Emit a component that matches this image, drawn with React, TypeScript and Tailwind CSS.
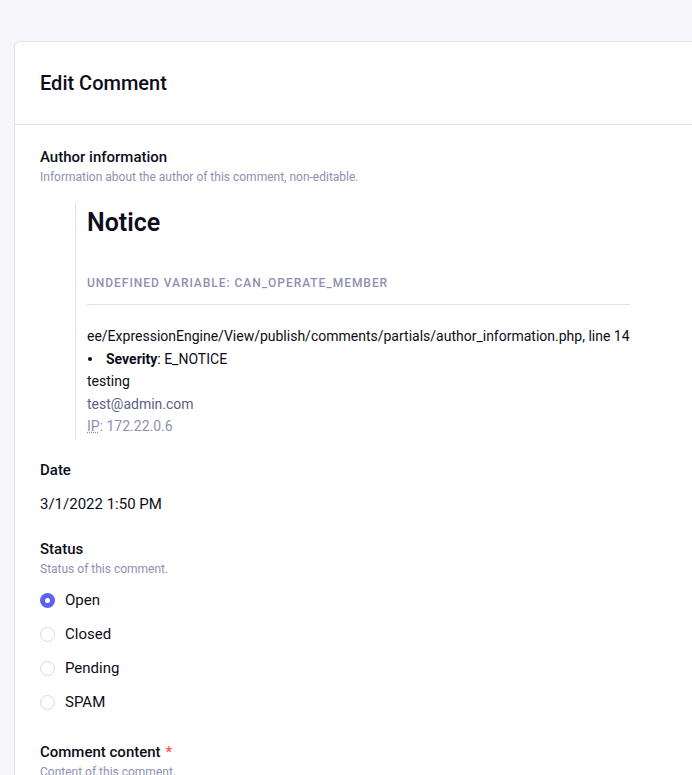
const statuses = [
  { label: "Open", checked: true },
  { label: "Closed", checked: false },
  { label: "Pending", checked: false },
  { label: "SPAM", checked: false },
];

const FieldLabel = ({ title, desc, required }: { title: string; desc?: string; required?: boolean }) => (
  <div>
    <div className="text-[15px] font-medium leading-[20px] text-[#0d0d19]">
      {title}
      {required && <span className="ml-[5px] text-[#fa5252]">*</span>}
    </div>
    {desc && <div className="mt-[1px] text-[12px] leading-[18px] text-[#8f90b0]">{desc}</div>}
  </div>
);

const Radio = ({ label, checked }: { label: string; checked: boolean }) => (
  <label className="flex h-[34px] items-center gap-[10px]">
    {checked ? (
      <span className="flex h-[15px] w-[15px] items-center justify-center rounded-full bg-[#5d63f1]">
        <span className="h-[5px] w-[5px] rounded-full bg-white" />
      </span>
    ) : (
      <span className="h-[15px] w-[15px] rounded-full border border-[#d8d8e6] bg-white" />
    )}
    <span className="text-[15px] text-[#0d0d19]">{label}</span>
  </label>
);

const App = () => {
  return (
    <div
      className="min-h-[775px] overflow-hidden bg-[#f5f5fa] pl-[14px] pt-[41px]"
      style={{ fontFamily: "Roboto, 'Liberation Sans', sans-serif" }}
    >
      <div className="-mr-4 rounded-tl-[6px] border border-[#e0e0ef] bg-white">
        <div className="flex h-[83px] items-center border-b border-[#e0e0ef] px-[25px]">
          <h1 className="text-[20px] font-medium text-[#0d0d19]">Edit Comment</h1>
        </div>

        <div className="px-[25px] pt-[22px]">
          <FieldLabel title="Author information" desc="Information about the author of this comment, non-editable." />

          <div className="ml-[35px] mt-[17px] w-fit border-l border-[#e0e0ef] pl-[11px] pb-[2px]">
            <h2 className="pt-[3px] text-[25px] font-semibold leading-[34px] text-[#0d0d19]">Notice</h2>
            <div className="mt-[34px] text-[12px] font-medium uppercase leading-[18px] tracking-[0.08em] text-[#8f90b0]">
              Undefined variable: can_operate_member
            </div>
            <hr className="mt-[12px] border-t border-[#e0e0ef]" />
            <div className="mt-[20px] text-[14px] leading-[22.5px] text-[#0d0d19]">
              <div>ee/ExpressionEngine/View/publish/comments/partials/author_information.php, line 14</div>
              <div className="flex items-center">
                <span className="ml-[1px] mr-[14px] h-[4px] w-[4px] rounded-full bg-[#0d0d19]" />
                <span>
                  <b className="font-bold">Severity</b>: E_NOTICE
                </span>
              </div>
              <div>testing</div>
              <div className="text-[#5d5f86]">test@admin.com</div>
              <div className="text-[#8f90b0]">
                <abbr className="underline decoration-dotted">IP</abbr>: 172.22.0.6
              </div>
            </div>
          </div>

          <div className="mt-[20px]">
            <FieldLabel title="Date" />
            <div className="mt-[14px] text-[15px] leading-[20px] text-[#0d0d19]">3/1/2022 1:50 PM</div>
          </div>

          <div className="mt-[25px]">
            <FieldLabel title="Status" desc="Status of this comment." />
            <div className="mt-[6px]">
              {statuses.map((s) => (
                <Radio key={s.label} label={s.label} checked={s.checked} />
              ))}
            </div>
          </div>

          <div className="mt-[22px]">
            <FieldLabel title="Comment content" desc="Content of this comment." required />
          </div>
        </div>
      </div>
    </div>
  );
};

export default App;
